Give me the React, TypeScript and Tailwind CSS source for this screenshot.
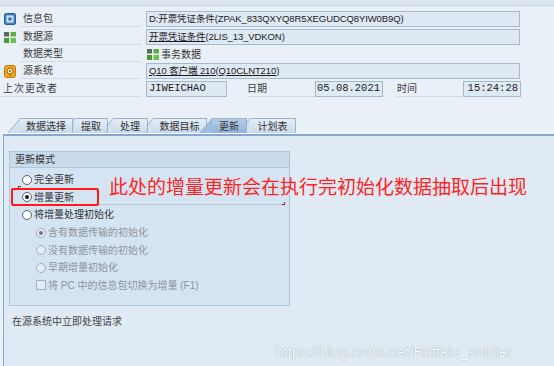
import React from "react";

const ui = "font-['Liberation_Sans','Noto_Sans_CJK_SC',sans-serif]";
const mono = "font-['Liberation_Mono','Noto_Sans_CJK_SC',monospace]";

function PackageIcon() {
  return (
    <svg width="12" height="12" viewBox="0 0 12 12">
      <rect x="0.5" y="0.5" width="11" height="11" rx="1.5" fill="#3f86c9" stroke="#2a5f97" />
      <rect x="3" y="3" width="6" height="6" fill="#bcd9f3" stroke="#e8f2fb" strokeWidth="0.8" />
      <rect x="4.5" y="4.5" width="3" height="3" fill="#2f6fb0" />
    </svg>
  );
}

function GridIcon() {
  return (
    <svg width="12" height="11" viewBox="0 0 12 11">
      <rect x="0" y="0" width="5" height="4.5" fill="#5a6a5a" />
      <rect x="6.5" y="0" width="5.5" height="4.5" fill="#5cb040" />
      <rect x="0" y="6" width="5" height="5" fill="#4a9a34" />
      <rect x="6.5" y="6" width="5.5" height="5" fill="#6cc24a" />
    </svg>
  );
}

function SystemIcon() {
  return (
    <svg width="12" height="13" viewBox="0 0 12 13">
      <rect x="0.5" y="0.5" width="11" height="12" rx="2" fill="#f3a524" stroke="#c47a10" />
      <circle cx="6" cy="6" r="3" fill="#ffe9a8" stroke="#9a5c08" strokeWidth="0.9" />
      <circle cx="6" cy="6" r="1" fill="#9a5c08" />
      <rect x="5.5" y="9" width="1" height="2" fill="#9a5c08" />
    </svg>
  );
}

function Field({ className, children }: { className: string; children: React.ReactNode }) {
  return (
    <div
      className={`flex h-[16px] items-center border border-[#a6b8cc] bg-[#dfe9f4] px-[2px] text-[#1b1b1b] ${className}`}
    >
      {children}
    </div>
  );
}

function Label({ children, className }: { children: React.ReactNode; className: string }) {
  return (
    <div className={`flex h-[16px] items-center border-b border-[#d2dce7] text-[10px] text-[#3c3c3c] ${className}`}>
      {children}
    </div>
  );
}

function Radio({ checked, disabled }: { checked?: boolean; disabled?: boolean }) {
  return (
    <span
      className={`flex h-[10px] w-[10px] items-center justify-center rounded-full border ${
        disabled ? "border-[#a3afbd] bg-[#e4ecf5]" : "border-[#5a6470] bg-white"
      }`}
    >
      {checked && (
        <span className={`h-[4px] w-[4px] rounded-full ${disabled ? "bg-[#6d7784]" : "bg-[#1c1c1c]"}`} />
      )}
    </span>
  );
}

type TabProps = {
  label: string;
  width: string;
  ml: string;
  z: string;
  active?: boolean;
};

function Tab({ label, width, ml, z, active }: TabProps) {
  const fill = active ? "#9fbddf" : "#d4e2f0";
  return (
    <div className={`relative flex h-[15px] ${ml} ${z}`}>
      <svg width="12" height="15" viewBox="0 0 12 15" className="block">
        <polygon points="0,15 12,0 12,15" fill={fill} />
        <line x1="0" y1="15" x2="12" y2="0.5" stroke="#9cb2cb" strokeWidth="1" />
      </svg>
      <div
        className={`flex h-[15px] items-center justify-center border-t border-r border-[#9cb2cb] bg-gradient-to-b text-[10px] text-[#333] ${width} ${
          active ? "from-[#b6cde7] to-[#93b3d9]" : "from-[#e6eef7] to-[#c8d9eb]"
        }`}
      >
        {label}
      </div>
    </div>
  );
}

export default function App() {
  return (
    <div className={`relative h-[366px] w-[554px] overflow-hidden bg-[#e9f0f7] ${ui}`}>
      <div className="h-[6px] border-b border-[#c6d3e1] bg-[#dde6f0]" />

      <div className="flex flex-col pt-[4px]">
        <div className="flex h-[18px] items-center">
          <div className="flex w-[20px] pl-[4px]"><PackageIcon /></div>
          <Label className="w-[121px] pl-[3px]">信息包</Label>
          <Field className="ml-[5px] w-[374px] text-[9.5px] tracking-[-0.1px]">
            D:开票凭证条件(ZPAK_833QXYQ8R5XEGUDCQ8YIW0B9Q)
          </Field>
        </div>
        <div className="flex h-[18px] items-center">
          <div className="flex w-[20px] pl-[4px]"><GridIcon /></div>
          <Label className="w-[121px] pl-[3px]">数据源</Label>
          <Field className="ml-[5px] w-[374px] text-[9.5px] tracking-[-0.1px]">
            <span className="underline">开票凭证条件</span>
            <span>(2LIS_13_VDKON)</span>
          </Field>
        </div>
        <div className="flex h-[16px] items-center">
          <div className="w-[20px]" />
          <Label className="w-[121px] pl-[3px]">数据类型</Label>
          <div className="ml-[6px] flex items-center gap-[2px] text-[10px] text-[#333]">
            <GridIcon />
            <span>事务数据</span>
          </div>
        </div>
        <div className="flex h-[18px] items-center">
          <div className="flex w-[20px] pl-[4px]"><SystemIcon /></div>
          <Label className="w-[121px] pl-[3px]">源系统</Label>
          <Field className="ml-[5px] w-[374px] text-[9.5px] tracking-[-0.1px]">
            <span className="underline">Q10 客户端 210(Q10CLNT210)</span>
          </Field>
        </div>
        <div className="flex h-[18px] items-center">
          <Label className="w-[141px] pl-[3px] tracking-[1px]">上次更改者</Label>
          <Field className={`ml-[5px] w-[81px] ${mono} text-[10.5px]`}>JIWEICHAO</Field>
          <Label className="ml-[20px] w-[68px] pl-0">日期</Label>
          <Field className={`w-[68px] justify-end ${mono} text-[10.5px]`}>05.08.2021</Field>
          <Label className="ml-[14px] w-[66px]">时间</Label>
          <Field className={`w-[58px] justify-end ${mono} text-[10.5px]`}>15:24:28</Field>
        </div>
      </div>

      <div className="mt-[20px] flex border-b border-[#f4f8fc] pl-[8px]">
        <Tab label="数据选择" width="w-[53px]" ml="ml-0" z="z-[6]" />
        <Tab label="提取" width="w-[33px]" ml="-ml-[10px]" z="z-[5]" />
        <Tab label="处理" width="w-[35px]" ml="-ml-[7px]" z="z-[4]" />
        <Tab label="数据目标" width="w-[54px]" ml="-ml-[7px]" z="z-[3]" />
        <Tab label="更新" width="w-[35px]" ml="-ml-[7px]" z="z-[10]" active />
        <Tab label="计划表" width="w-[46px]" ml="-ml-[9px]" z="z-[2]" />
      </div>

      <div className="ml-[3px] h-[240px] border-t-2 border-l border-[#86a8cf] bg-[#dfeaf5] pl-[5px] pt-[15px]">
        <div className="relative w-[281px] border border-[#afc5dc] bg-[#d5e4f3]">
          <div className="flex h-[16px] items-center border-b border-[#afc5dc] bg-[#c8daec] pl-[5px] text-[10px] text-[#333]">
            更新模式
          </div>
          <div className="flex flex-col pb-[11px] pt-[3px] text-[10px]">
            <div className="flex h-[17.6px] items-center gap-[2px] pl-[12px] text-[#333]">
              <Radio />
              <span>完全更新</span>
            </div>
            <div className="flex h-[17.6px] items-center gap-[2px] pl-[12px] text-[#333]">
              <Radio checked />
              <span>增量更新</span>
            </div>
            <div className="flex h-[17.6px] items-center gap-[2px] pl-[12px] text-[#333]">
              <Radio />
              <span>将增量处理初始化</span>
            </div>
            <div className="flex h-[17.6px] items-center gap-[2px] pl-[26px] text-[#8c949e]">
              <Radio checked disabled />
              <span>含有数据传输的初始化</span>
            </div>
            <div className="flex h-[17.6px] items-center gap-[2px] pl-[26px] text-[#8c949e]">
              <Radio disabled />
              <span>没有数据传输的初始化</span>
            </div>
            <div className="flex h-[17.6px] items-center gap-[2px] pl-[26px] text-[#8c949e]">
              <Radio disabled />
              <span>早期增量初始化</span>
            </div>
            <div className="flex h-[17.6px] items-center gap-[2px] pl-[26px] text-[#8c949e]">
              <span className="h-[10px] w-[10px] border border-[#a3afbd] bg-[#e4ecf5]" />
              <span>将 PC 中的信息包切换为增量 (F1)</span>
            </div>
          </div>

          {/* focus marks on the selected row */}
          <div className="absolute left-[88px] top-[52px] h-px w-[186px] bg-[#b9c6d4]" />
          <div className="absolute left-[8px] top-[34px] h-[3px] w-[3px] border-l border-t border-[#b02020]" />
          <div className="absolute left-[272px] top-[50px] h-[3px] w-[3px] border-b border-r border-[#b02020]" />
          <div className="absolute left-[1px] top-[36px] h-[18px] w-[88px] rounded-[2px] border-2 border-[#ff1a1a]" />
        </div>

        <div className="mt-[8px] pl-[3px] text-[10px] text-[#444]">在源系统中立即处理请求</div>
      </div>

      <div className="absolute left-[109px] top-[174px] text-[19px] leading-[24px] text-[#ff2424] font-['Noto_Sans_CJK_SC',sans-serif]">
        此处的增量更新会在执行完初始化数据抽取后出现
      </div>

      <div className="absolute left-[275px] top-[343px] text-[15px] leading-[18px] text-[#f8fafc] [text-shadow:0_0_1px_rgba(90,105,125,0.8)]">
        https://blog.csdn.net/Buffalo_soldier
      </div>
    </div>
  );
}
